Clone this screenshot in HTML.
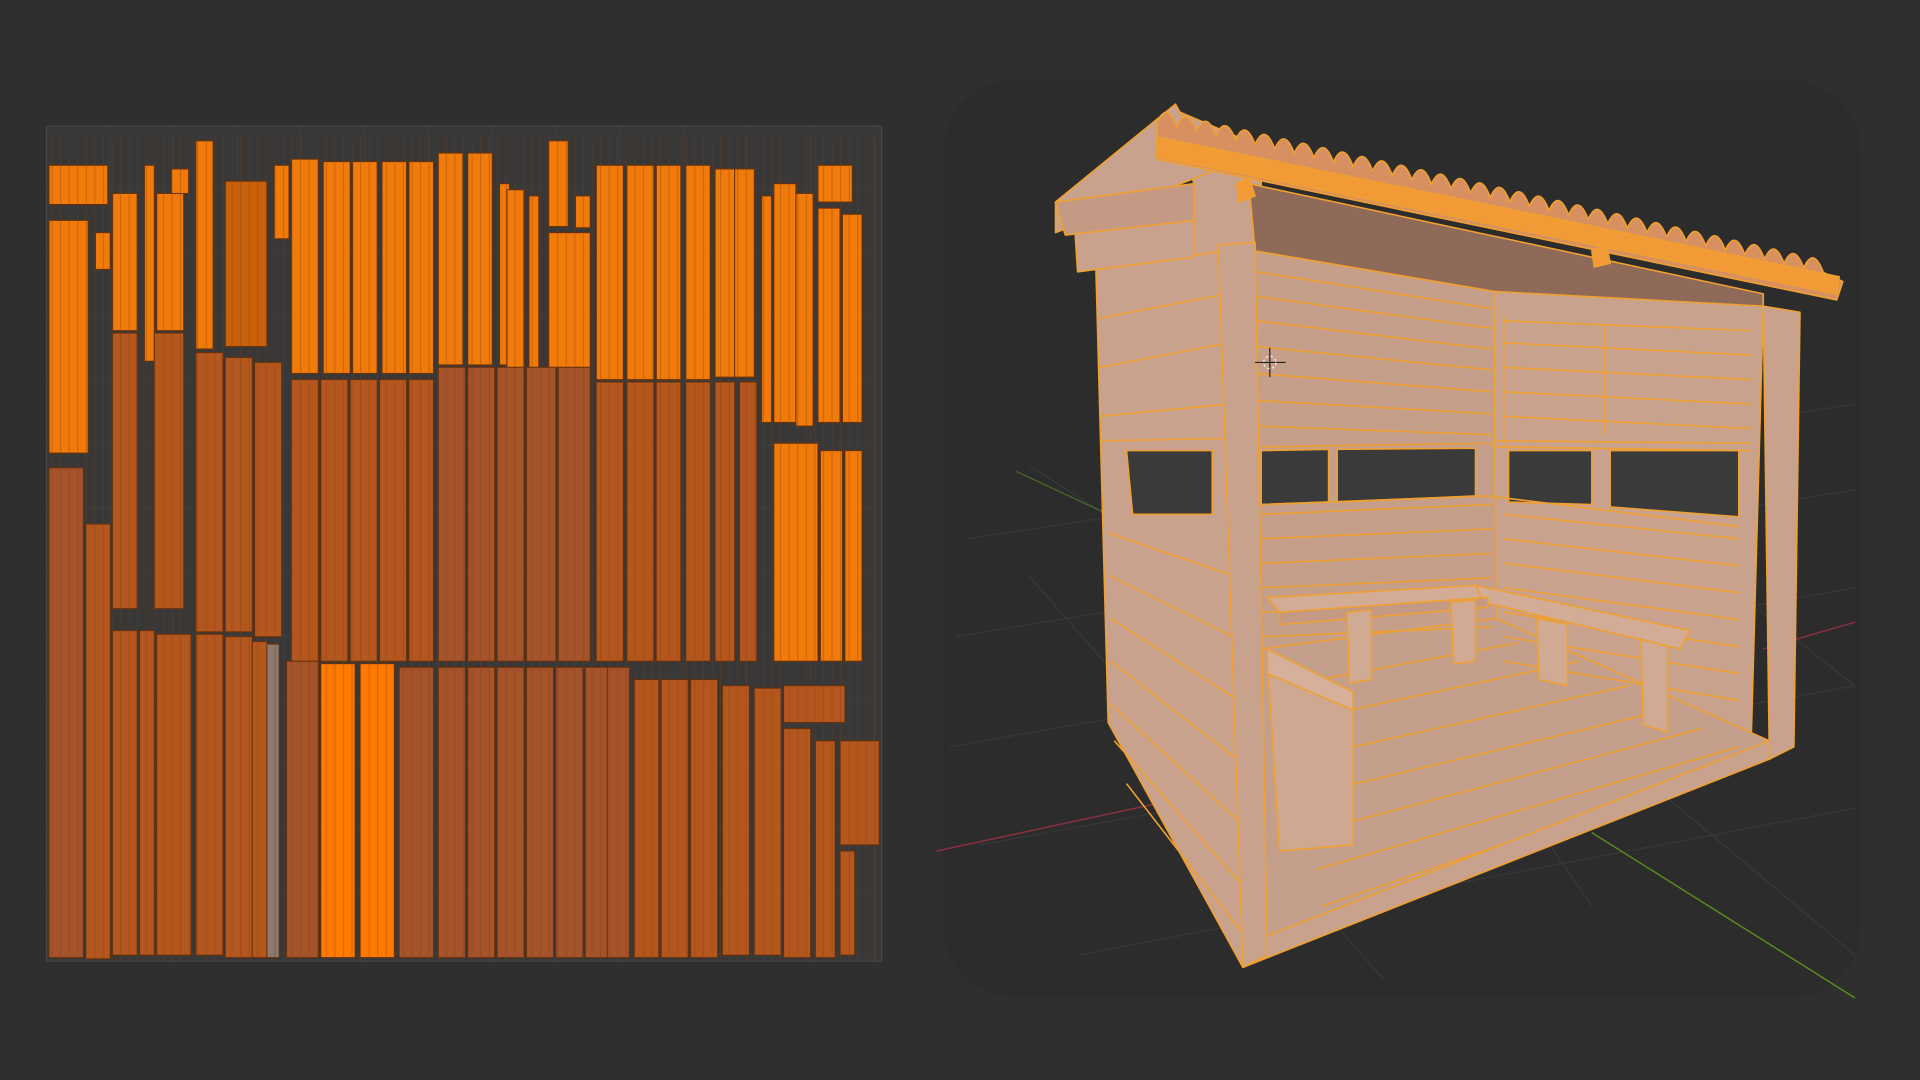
<!DOCTYPE html>
<html><head><meta charset="utf-8"><style>
html,body{margin:0;padding:0;background:#2f2f2f;width:1920px;height:1080px;overflow:hidden}
svg{display:block}
</style></head><body>
<svg width="1920" height="1080" viewBox="0 0 1568 882" preserveAspectRatio="none" xmlns="http://www.w3.org/2000/svg">
<defs>
<pattern id="vl" width="7" height="10" patternUnits="userSpaceOnUse"><rect width="7" height="10" fill="none"/><line x1="0.5" y1="0" x2="0.5" y2="10" stroke="#7a3a10" stroke-width="0.8" opacity="0.6"/></pattern>
<pattern id="grid" width="52" height="52" patternUnits="userSpaceOnUse" x="38" y="103"><path d="M52 0V52H0" fill="none" stroke="#424242" stroke-width="0.8"/></pattern>
</defs>
<rect width="1568" height="882" fill="#2f2f2f"/>
<rect x="770" y="65" width="750" height="750" rx="60" fill="#2c2c2c"/>
<g stroke="#383838" stroke-width="1" fill="none">
<path d="M790 440L1515 330M780 520L1515 400M775 610L1515 480M800 690L1515 560M880 780L1515 660M840 380L1060 520M840 470L1130 800M1000 300L1300 740M1300 600L1515 780M1400 470L1515 560"/>
</g>
<line x1="765" y1="695" x2="1020" y2="640" stroke="#8a3040" stroke-width="1.2"/>
<line x1="1440" y1="530" x2="1515" y2="508" stroke="#8a3040" stroke-width="1.2"/>
<line x1="1300" y1="680" x2="1515" y2="815" stroke="#5a8a20" stroke-width="1.2"/>
<line x1="830" y1="385" x2="905" y2="420" stroke="#4a6a2a" stroke-width="1"/>

<rect x="38" y="103" width="682" height="682" fill="#383838"/>
<rect x="38" y="103" width="682" height="682" fill="url(#grid)"/>
<g stroke="#6a3008" stroke-width="0.8">
<g fill="#f07a0a">
<rect x="40" y="135" width="48" height="32"/>
<rect x="40" y="180" width="32" height="190"/>
<rect x="78" y="190" width="12" height="30"/>
<rect x="92" y="158" width="20" height="112"/>
<rect x="118" y="135" width="8" height="160"/>
<rect x="128" y="158" width="22" height="112"/>
<rect x="140" y="138" width="14" height="20"/>
<rect x="160" y="115" width="14" height="170"/>
<rect x="184" y="148" width="34" height="135" fill="#c8600c"/>
<rect x="224" y="135" width="12" height="60"/>
<rect x="238" y="130" width="22" height="175"/>
<rect x="264" y="132" width="22" height="173"/>
<rect x="288" y="132" width="20" height="173"/>
<rect x="312" y="132" width="20" height="173"/>
<rect x="334" y="132" width="20" height="173"/>
<rect x="358" y="125" width="20" height="173"/>
<rect x="382" y="125" width="20" height="173"/>
<rect x="408" y="150" width="8" height="148"/>
<rect x="414" y="155" width="14" height="145"/>
<rect x="432" y="160" width="8" height="140"/>
<rect x="448" y="115" width="16" height="70"/>
<rect x="448" y="190" width="34" height="110"/>
<rect x="470" y="160" width="12" height="26"/>
<rect x="487" y="135" width="22" height="175"/>
<rect x="512" y="135" width="22" height="175"/>
<rect x="536" y="135" width="20" height="175"/>
<rect x="560" y="135" width="20" height="175"/>
<rect x="584" y="138" width="16" height="170"/>
<rect x="600" y="138" width="16" height="170"/>
<rect x="622" y="160" width="8" height="185"/>
<rect x="632" y="150" width="18" height="195"/>
<rect x="650" y="158" width="14" height="190"/>
<rect x="668" y="170" width="18" height="175"/>
<rect x="688" y="175" width="16" height="170"/>
<rect x="668" y="135" width="28" height="30"/>
<rect x="632" y="362" width="36" height="178"/>
<rect x="670" y="368" width="18" height="172"/>
<rect x="690" y="368" width="14" height="172"/>
<rect x="262" y="542" width="28" height="240" fill="#ff7a00"/>
<rect x="294" y="542" width="28" height="240" fill="#ff7a00"/>
</g>
<g fill="#b4571f">
<rect x="92" y="272" width="20" height="225"/>
<rect x="126" y="272" width="24" height="225"/>
<rect x="160" y="288" width="22" height="228"/>
<rect x="184" y="292" width="22" height="224"/>
<rect x="208" y="296" width="22" height="224"/>
<rect x="238" y="310" width="22" height="230"/>
<rect x="262" y="310" width="22" height="230"/>
<rect x="286" y="310" width="22" height="230"/>
<rect x="310" y="310" width="22" height="230"/>
<rect x="334" y="310" width="20" height="230"/>
<rect x="358" y="300" width="22" height="240" fill="#a4532a"/>
<rect x="382" y="300" width="22" height="240" fill="#a4532a"/>
<rect x="406" y="300" width="22" height="240" fill="#a4532a"/>
<rect x="430" y="300" width="24" height="240" fill="#a4532a"/>
<rect x="456" y="300" width="26" height="240" fill="#a4532a"/>
<rect x="487" y="312" width="22" height="228"/>
<rect x="512" y="312" width="22" height="228"/>
<rect x="536" y="312" width="20" height="228"/>
<rect x="560" y="312" width="20" height="228"/>
<rect x="584" y="312" width="16" height="228"/>
<rect x="604" y="312" width="14" height="228"/>
<rect x="40" y="382" width="28" height="400" fill="#a4532a"/>
<rect x="70" y="428" width="20" height="355"/>
<rect x="92" y="515" width="20" height="265"/>
<rect x="114" y="515" width="12" height="265"/>
<rect x="128" y="518" width="28" height="262"/>
<rect x="160" y="518" width="22" height="262"/>
<rect x="184" y="520" width="22" height="262"/>
<rect x="206" y="524" width="12" height="258"/>
<rect x="218" y="526" width="10" height="256" fill="#8a7a70"/>
<rect x="234" y="540" width="26" height="242" fill="#a4532a"/>
<rect x="326" y="545" width="28" height="237" fill="#a4532a"/>
<rect x="358" y="545" width="22" height="237" fill="#a4532a"/>
<rect x="382" y="545" width="22" height="237" fill="#a4532a"/>
<rect x="406" y="545" width="22" height="237" fill="#a4532a"/>
<rect x="430" y="545" width="22" height="237" fill="#a4532a"/>
<rect x="454" y="545" width="22" height="237" fill="#a4532a"/>
<rect x="478" y="545" width="18" height="237" fill="#a4532a"/>
<rect x="496" y="545" width="18" height="237" fill="#a4532a"/>
<rect x="518" y="555" width="20" height="227"/>
<rect x="540" y="555" width="22" height="227"/>
<rect x="564" y="555" width="22" height="227"/>
<rect x="590" y="560" width="22" height="220"/>
<rect x="616" y="562" width="22" height="218"/>
<rect x="640" y="595" width="22" height="187"/>
<rect x="666" y="605" width="16" height="177"/>
<rect x="686" y="605" width="32" height="85"/>
<rect x="640" y="560" width="50" height="30"/>
<rect x="686" y="695" width="12" height="85"/>
</g>
</g>
<rect x="40" y="112" width="680" height="673" fill="url(#vl)" opacity="0.6"/>
<rect x="38" y="103" width="682" height="682" fill="none" stroke="#454545"/>

<g stroke="#f0a030" stroke-width="1.3" stroke-linejoin="round">
<polygon points="960,90 1030,120 1030,205 975,212 975,150" fill="#c9a28d"/>
<polygon points="1020,150 1440,240 1440,255 1220,238 1025,205" fill="#8f6a58"/>
<polygon points="1025,205 1220,238 1222,540 1030,535" fill="#c69f8b"/>
<polygon points="1220,238 1440,250 1430,610 1222,540" fill="#c9a28d"/>
<polygon points="1030,530 1222,505 1445,605 1015,790" fill="#c4a08c"/>
<g fill="#3a3a3a" stroke="#f0a030">
<polygon points="1030,368 1085,367 1085,410 1030,412"/>
<polygon points="1092,367 1205,366 1205,405 1092,410"/>
<polygon points="1232,368 1300,368 1300,412 1232,410"/>
<polygon points="1315,368 1420,368 1420,422 1315,414"/>
</g>
<g fill="none">
<path d="M1026 222L1218 252M1026 242L1218 268M1026 262L1218 285M1026 283L1218 302M1026 305L1218 320M1026 327L1218 338M1026 348L1218 355M1030 420L1218 412M1030 440L1218 432M1030 460L1218 452M1030 480L1218 472M1030 500L1218 492M1030 520L1218 512"/>
<path d="M1228 262L1430 270M1228 280L1430 290M1228 300L1430 310M1228 320L1430 330M1228 340L1430 350M1222 360L1430 362M1228 420L1420 440M1228 440L1420 462M1228 460L1420 484M1228 480L1420 506M1228 500L1420 528M1228 520L1420 550M1228 540L1420 572"/>
<path d="M1310 265V355M1228 258V365"/>
<path d="M1050 560L1240 525M1055 590L1290 540M1060 620L1330 560M1065 650L1360 580M1070 680L1390 595M1075 710L1420 610M1080 740L1430 620"/>
<path d="M1030 365L1215 362L1222 365L1430 368M1030 412L1215 405L1420 430"/>
</g>
<polygon points="1035,488 1205,478 1215,488 1045,500" fill="#d2ac94"/>
<polygon points="1205,478 1380,515 1372,530 1212,492" fill="#d2ac94"/>
<polygon points="1045,500 1215,488 1215,496 1045,510" fill="#c49a84"/>
<polygon points="1100,500 1120,498 1120,555 1102,558" fill="#d0aa92"/>
<polygon points="1185,492 1205,490 1205,540 1187,542" fill="#d0aa92"/>
<polygon points="1255,505 1280,510 1280,560 1257,555" fill="#d0aa92"/>
<polygon points="1340,522 1362,528 1362,598 1342,592" fill="#d0aa92"/>
<polygon points="1035,540 1105,572 1105,690 1045,695" fill="#cfa891"/>
<polygon points="1035,530 1105,565 1105,580 1035,550" fill="#d6b09a"/>
<polygon points="1015,790 1445,620 1445,605 1020,770" fill="#c9a28d"/>
<polygon points="1440,250 1470,255 1465,610 1445,620" fill="#c9a28d"/>
<polygon points="895,220 1000,205 1015,790 905,590" fill="#c9a28d"/>
<g fill="none">
<path d="M897 260L1002 240M898 300L1003 280M898 340L1004 330M899 360L1004 358M905 435L1006 470M906 470L1007 520M907 505L1008 570M907 540L1010 620M907 575L1011 670M910 605L1012 720M920 640L1013 760"/>
</g>
<polygon points="920,368 990,368 990,420 925,420" fill="#3a3a3a"/>
<polygon points="995,200 1025,198 1035,780 1015,790" fill="#c9a28d"/>
<polygon points="878,190 975,180 975,210 880,222" fill="#c9a28d"/>
<polygon points="862,165 960,85 990,140 862,190" fill="#c9a28d"/>
<polygon points="862,165 975,150 975,180 870,192" fill="#c49a84"/>
<path d="M945 100 q8 -18 16 3.6 q8 -18 16 3.6 q8 -18 16 3.6 q8 -18 16 3.6 q8 -18 16 3.6 q8 -18 16 3.6 q8 -18 16 3.6 q8 -18 16 3.6 q8 -18 16 3.6 q8 -18 16 3.6 q8 -18 16 3.6 q8 -18 16 3.6 q8 -18 16 3.6 q8 -18 16 3.6 q8 -18 16 3.6 q8 -18 16 3.6 q8 -18 16 3.6 q8 -18 16 3.6 q8 -18 16 3.6 q8 -18 16 3.6 q8 -18 16 3.6 q8 -18 16 3.6 q8 -18 16 3.6 q8 -18 16 3.6 q8 -18 16 3.6 q8 -18 16 3.6 q8 -18 16 3.6 q8 -18 16 3.6 q8 -18 16 3.6 q8 -18 16 3.6 q8 -18 16 3.6 q8 -18 16 3.6 q8 -18 16 3.6 q8 -18 16 3.6 L1505 230 L1500 245 L945 130 Z" fill="#d89060"/>
<polygon points="945,112 1502,226 1500,240 945,128" fill="#f29a35"/>
<polygon points="1010,150 1020,145 1025,160 1012,165" fill="#f29a35"/>
<polygon points="1300,205 1312,200 1315,215 1302,218" fill="#f29a35"/>
</g>
<g stroke="#222" stroke-width="1"><line x1="1025" y1="296" x2="1050" y2="296"/><line x1="1037" y1="284" x2="1037" y2="308"/><circle cx="1037" cy="296" r="5" fill="none" stroke="#eee" stroke-dasharray="2 2"/></g>
</svg>
</body></html>
